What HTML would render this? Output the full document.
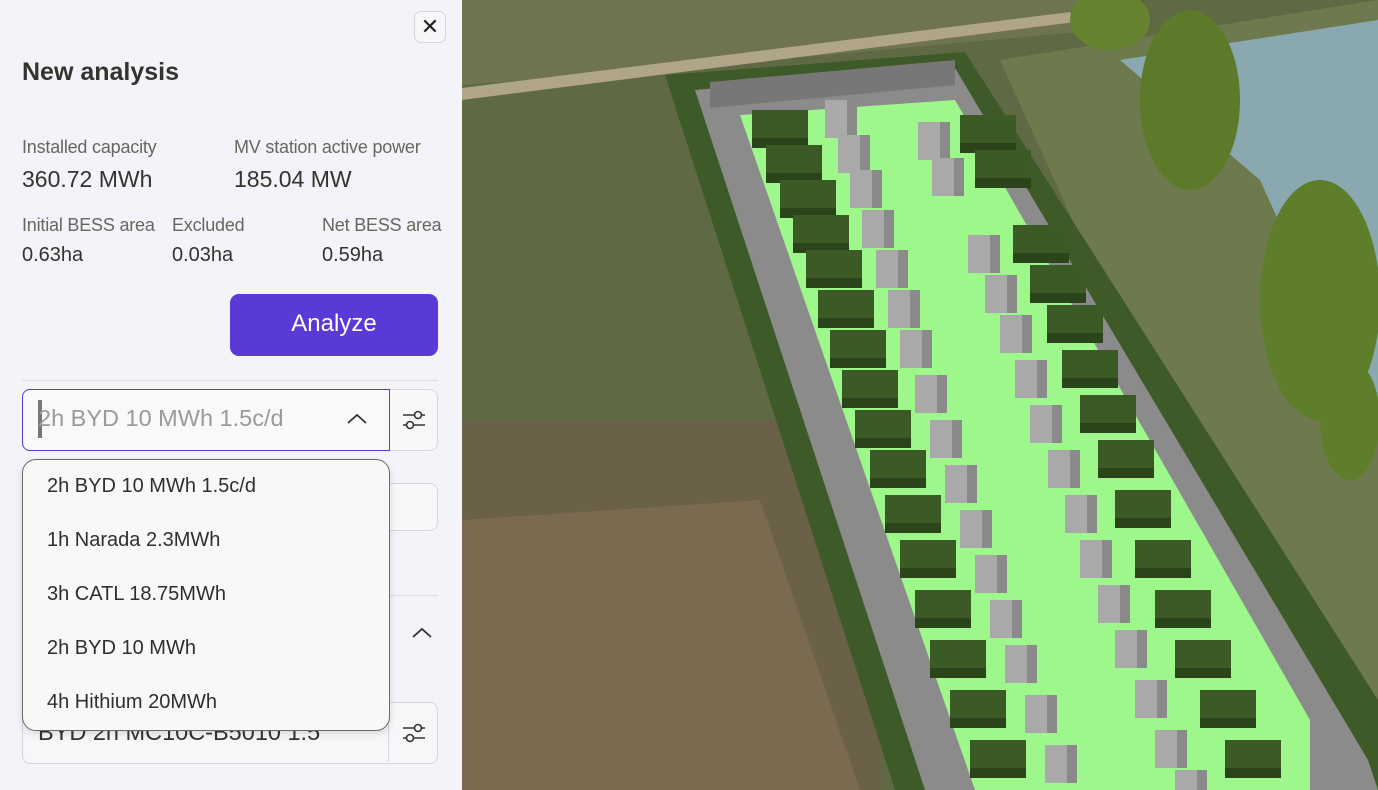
<!DOCTYPE html><html><head><style>
body{margin:0;width:1378px;height:790px;overflow:hidden;position:relative;font-family:"Liberation Sans",sans-serif;background:#5f6845}
#p{position:absolute;left:0;top:0;width:462px;height:790px;background:#f4f3f9}
.a{position:absolute;white-space:nowrap}
.l{font-size:18px;color:#66675f;letter-spacing:-0.2px}
.v{font-size:23px;color:#33342e}
.box{position:absolute;border:1px solid #d6d6dc;border-radius:8px;background:#f7f7f9}
.it{position:absolute;left:24px;font-size:20px;color:#2f302b}
</style></head><body>
<svg style="position:absolute;left:462px;top:0" width="916" height="790" viewBox="462 0 916 790">
<defs>
<g id="d"><rect width="56" height="36" fill="#3b5a25"/><rect y="28" width="56" height="10" fill="#2b4419"/></g>
<g id="g"><rect width="32" height="38" fill="#a9a9a9"/><rect x="22" width="10" height="38" fill="#8a8a8a"/></g>
</defs>
<rect x="462" y="0" width="916" height="790" fill="#5f6a45"/>
<rect x="462" y="420" width="420" height="370" fill="#6b6048"/>
<polygon points="462,520 760,500 860,790 462,790" fill="#7a6a50"/>
<polygon points="462,0 1100,0 1100,30 660,70 462,85" fill="#6e7450"/>
<polygon points="462,88 1070,12 1075,22 462,100" fill="#b0a588"/>
<polygon points="1000,60 1378,0 1378,790 1330,790" fill="#6e7a4d"/>
<polygon points="1120,60 1378,20 1378,440 1260,180" fill="#8aa8b0"/>
<polygon points="665,75 965,52 1378,700 1378,790 895,790" fill="#3e5a28"/>
<polygon points="695,90 955,68 1368,760 1378,790 925,790" fill="#8b8b8b"/>
<polygon points="740,115 955,100 1310,720 1310,790 975,790" fill="#9ef78b"/>
<polygon points="710,82 955,60 955,85 710,108" fill="#777"/>
<use href="#d" x="752" y="110"/><use href="#d" x="766" y="145"/><use href="#d" x="780" y="180"/><use href="#d" x="793" y="215"/><use href="#d" x="806" y="250"/><use href="#d" x="818" y="290"/><use href="#d" x="830" y="330"/><use href="#d" x="842" y="370"/><use href="#d" x="855" y="410"/><use href="#d" x="870" y="450"/><use href="#d" x="885" y="495"/><use href="#d" x="900" y="540"/><use href="#d" x="915" y="590"/><use href="#d" x="930" y="640"/><use href="#d" x="950" y="690"/><use href="#d" x="970" y="740"/>
<use href="#g" x="825" y="100"/><use href="#g" x="838" y="135"/><use href="#g" x="850" y="170"/><use href="#g" x="862" y="210"/><use href="#g" x="876" y="250"/><use href="#g" x="888" y="290"/><use href="#g" x="900" y="330"/><use href="#g" x="915" y="375"/><use href="#g" x="930" y="420"/><use href="#g" x="945" y="465"/><use href="#g" x="960" y="510"/><use href="#g" x="975" y="555"/><use href="#g" x="990" y="600"/><use href="#g" x="1005" y="645"/><use href="#g" x="1025" y="695"/><use href="#g" x="1045" y="745"/>
<use href="#g" x="918" y="122"/><use href="#g" x="932" y="158"/><use href="#g" x="968" y="235"/><use href="#g" x="985" y="275"/><use href="#g" x="1000" y="315"/><use href="#g" x="1015" y="360"/><use href="#g" x="1030" y="405"/><use href="#g" x="1048" y="450"/><use href="#g" x="1065" y="495"/><use href="#g" x="1080" y="540"/><use href="#g" x="1098" y="585"/><use href="#g" x="1115" y="630"/><use href="#g" x="1135" y="680"/><use href="#g" x="1155" y="730"/><use href="#g" x="1175" y="770"/>
<use href="#d" x="960" y="115"/><use href="#d" x="975" y="150"/><use href="#d" x="1013" y="225"/><use href="#d" x="1030" y="265"/><use href="#d" x="1047" y="305"/><use href="#d" x="1062" y="350"/><use href="#d" x="1080" y="395"/><use href="#d" x="1098" y="440"/><use href="#d" x="1115" y="490"/><use href="#d" x="1135" y="540"/><use href="#d" x="1155" y="590"/><use href="#d" x="1175" y="640"/><use href="#d" x="1200" y="690"/><use href="#d" x="1225" y="740"/>
<ellipse cx="1190" cy="100" rx="50" ry="90" fill="#5c7a2a"/><ellipse cx="1110" cy="20" rx="40" ry="30" fill="#66832f"/><ellipse cx="1320" cy="300" rx="60" ry="120" fill="#5f7e2c"/><ellipse cx="1350" cy="420" rx="30" ry="60" fill="#5f7e2c"/>
</svg>
<div id="p">
<div class="box" style="left:414px;top:11px;width:30px;height:30px;border-radius:7px;text-align:center;line-height:30px;font-size:22px;color:#222">✕</div>
<div class="a" style="left:22px;top:58px;font-size:25px;font-weight:bold;color:#33342e">New analysis</div>
<div class="a l" style="left:22px;top:137px">Installed capacity</div>
<div class="a l" style="left:234px;top:137px">MV station active power</div>
<div class="a v" style="left:22px;top:166px">360.72 MWh</div>
<div class="a v" style="left:234px;top:166px">185.04 MW</div>
<div class="a l" style="left:22px;top:215px">Initial BESS area</div>
<div class="a l" style="left:172px;top:215px">Excluded</div>
<div class="a l" style="left:322px;top:215px">Net BESS area</div>
<div class="a v" style="left:22px;top:244px;font-size:20px">0.63ha</div>
<div class="a v" style="left:172px;top:244px;font-size:20px">0.03ha</div>
<div class="a v" style="left:322px;top:244px;font-size:20px">0.59ha</div>
<div class="a" style="left:230px;top:294px;width:208px;height:62px;background:#5a3ad6;border-radius:9px;color:#fff;font-size:24px;text-align:center;line-height:60px">Analyze</div>
<div class="a" style="left:22px;top:380px;width:416px;height:1px;background:#dcdce2"></div>
<div class="box" style="left:22px;top:389px;width:414px;height:60px"></div>
<div class="a" style="left:22px;top:389px;width:366px;height:60px;border:1px solid #5a3ad6;border-radius:8px 0 0 8px;background:#f9f9fb"></div>
<div class="a" style="left:38px;top:400px;width:4px;height:38px;background:#777"></div>
<div class="a" style="left:38px;top:405px;font-size:23.5px;color:#9a9a9a">2h BYD 10 MWh 1.5c/d</div>
<svg class="a" style="left:346px;top:412px" width="22" height="14"><path d="M2 11 L11 3 L20 11" fill="none" stroke="#333" stroke-width="1.8"/></svg>
<svg class="a" style="left:401px;top:407px" width="26" height="26"><path d="M2 8H24M2 18H24" stroke="#333" stroke-width="1.6"/><circle cx="17" cy="8" r="3.5" fill="#f7f7f9" stroke="#333" stroke-width="1.6"/><circle cx="9" cy="18" r="3.5" fill="#f7f7f9" stroke="#333" stroke-width="1.6"/></svg>
<div class="box" style="left:360px;top:483px;width:76px;height:46px"></div>
<div class="a" style="left:22px;top:595px;width:416px;height:1px;background:#dcdce2"></div>
<svg class="a" style="left:411px;top:626px" width="22" height="14"><path d="M2 11 L11 3 L20 11" fill="none" stroke="#333" stroke-width="1.8"/></svg>
<div class="box" style="left:22px;top:702px;width:414px;height:60px"></div>
<div class="a" style="left:388px;top:702px;width:1px;height:60px;background:#d6d6dc"></div>
<div class="a" style="left:38px;top:719px;font-size:23.5px;color:#333">BYD 2h MC10C-B5010 1.5</div>
<svg class="a" style="left:401px;top:720px" width="26" height="26"><path d="M2 8H24M2 18H24" stroke="#333" stroke-width="1.6"/><circle cx="17" cy="8" r="3.5" fill="#f7f7f9" stroke="#333" stroke-width="1.6"/><circle cx="9" cy="18" r="3.5" fill="#f7f7f9" stroke="#333" stroke-width="1.6"/></svg>
<div class="a" style="left:22px;top:459px;width:366px;height:270px;background:#f8f8f8;border:1px solid #6a6a64;border-radius:14px;box-shadow:0 3px 8px rgba(0,0,0,.12)">
<div class="it" style="top:15px">2h BYD 10 MWh 1.5c/d</div>
<div class="it" style="top:69px">1h Narada 2.3MWh</div>
<div class="it" style="top:123px">3h CATL 18.75MWh</div>
<div class="it" style="top:177px">2h BYD 10 MWh</div>
<div class="it" style="top:231px">4h Hithium 20MWh</div>
</div>
</div>
</body></html>
